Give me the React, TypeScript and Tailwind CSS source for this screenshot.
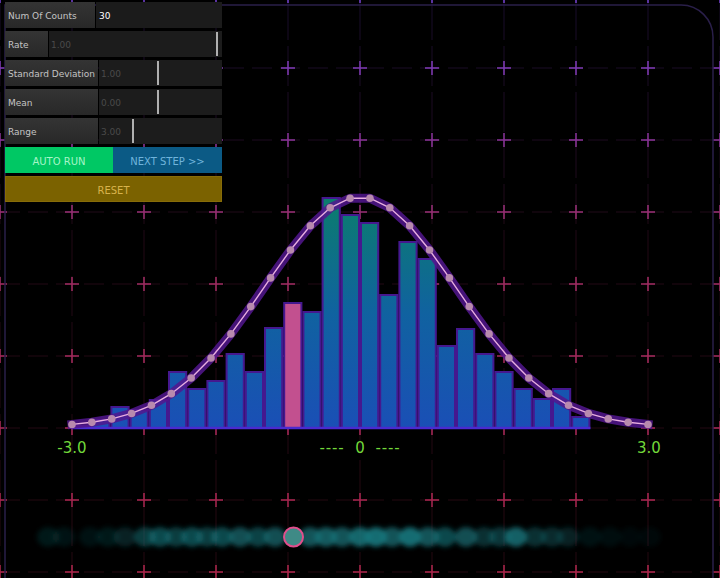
import React from 'react'

const W = 720
const H = 578
const GX = Array.from({ length: 11 }, (_, i) => i * 72)
const GY = Array.from({ length: 9 }, (_, i) => -4 + i * 72)

const AXIS_L = 72
const AXIS_R = 648
const BASE = 428
const BIN = (AXIS_R - AXIS_L) / 30

// top y of each bin, null = empty bin
const BAR_TOPS: (number | null)[] = [
  426, 420, 407, 410, 400, 372, 389, 381, 354, 372, 328, 303, 312, 198, 215,
  223, 295, 242, 259, 346, 329, 354, 372, 389, 399, 389, 417, null, null, null,
]
const PICKED = 11

const CURVE = Array.from({ length: 30 }, (_, i) => {
  const v = -3 + (i * 6) / 29
  return {
    x: AXIS_L + (i * (AXIS_R - AXIS_L)) / 29,
    y: 427 - 230 * Math.exp(-(v * v) / 2),
  }
})

// samples strip at the bottom: [x, opacity]
const BLOBS: [number, number][] = [
  [48, 0.2], [64, 0.16], [90, 0.14], [108, 0.2], [125, 0.28], [145, 0.5],
  [160, 0.6], [176, 0.5], [192, 0.6], [207, 0.5], [222, 0.6], [240, 0.65],
  [258, 0.55], [275, 0.65], [310, 0.7], [326, 0.75], [342, 0.7], [360, 0.85],
  [376, 0.9], [392, 0.7], [410, 0.9], [428, 0.7], [445, 0.6], [466, 0.65],
  [484, 0.4], [500, 0.45], [516, 0.8], [535, 0.4], [552, 0.35], [568, 0.28],
  [590, 0.14], [610, 0.11], [630, 0.08], [650, 0.07],
]

function Canvas() {
  const pts = CURVE.map((p) => `${p.x.toFixed(1)},${p.y.toFixed(1)}`).join(' ')
  return (
    <svg className="absolute inset-0" width={W} height={H} viewBox={`0 0 ${W} ${H}`}>
      <defs>
        <linearGradient id="grid" x1="0" y1="0" x2="0" y2={H} gradientUnits="userSpaceOnUse">
          <stop offset="0" stopColor="#7a45d8" />
          <stop offset="0.22" stopColor="#9038a8" />
          <stop offset="0.42" stopColor="#a8306c" />
          <stop offset="1" stopColor="#b82850" />
        </linearGradient>
        <linearGradient id="bar" x1="0" y1="198" x2="0" y2={BASE} gradientUnits="userSpaceOnUse">
          <stop offset="0" stopColor="#0b7d6c" />
          <stop offset="0.5" stopColor="#1062a0" />
          <stop offset="1" stopColor="#1a4fb6" />
        </linearGradient>
        <filter id="blur" x="-50%" y="-50%" width="200%" height="200%">
          <feGaussianBlur stdDeviation="2.6" />
        </filter>
      </defs>

      {/* grid */}
      <g stroke="url(#grid)" strokeWidth="1" opacity="0.2">
        {GX.map((x) => (
          <line key={`v${x}`} x1={x} y1={0} x2={x} y2={H} strokeDasharray="40 6" />
        ))}
        {GY.map((y) => (
          <line key={`h${y}`} x1={0} y1={y} x2={W} y2={y} strokeDasharray="20 8" />
        ))}
      </g>
      <g stroke="url(#grid)" strokeWidth="1.6" opacity="0.9">
        {GX.map((x) =>
          GY.map((y) => (
            <g key={`c${x}-${y}`}>
              <line x1={x - 7} y1={y} x2={x + 7} y2={y} />
              <line x1={x} y1={y - 7} x2={x} y2={y + 7} />
            </g>
          )),
        )}
      </g>

      {/* frame */}
      <path d="M5 578 V5 H681 A32 32 0 0 1 713 37 V578" fill="none" stroke="#2a1f4a" strokeWidth="1.5" />

      {/* histogram */}
      <g stroke="#45188f" strokeWidth="2">
        {BAR_TOPS.map((top, i) =>
          top === null ? null : (
            <rect
              key={i}
              x={AXIS_L + i * BIN + 1}
              y={top}
              width={BIN - 2}
              height={BASE - top}
              fill={i === PICKED ? '#c2508f' : 'url(#bar)'}
            />
          ),
        )}
      </g>
      <line x1={AXIS_L - 1} y1={BASE} x2={AXIS_L + 27 * BIN} y2={BASE} stroke="#4a2ad0" strokeWidth="2.5" />

      {/* normal curve */}
      <polyline points={pts} fill="none" stroke="#52168e" strokeOpacity="0.85" strokeWidth="9" strokeLinecap="square" strokeLinejoin="round" />
      <polyline points={pts} fill="none" stroke="#e8aee0" strokeWidth="1.4" />
      {CURVE.map((p, i) => (
        <circle key={i} cx={p.x} cy={p.y} r="3.8" fill="#b88aae" />
      ))}

      {/* axis labels */}
      <g fill="#72d83a" fontFamily="'DejaVu Sans', sans-serif" fontSize="15" textAnchor="middle">
        <text x="72" y="453">-3.0</text>
        <text x="649" y="453">3.0</text>
        <text x="332" y="453" letterSpacing="0.8">----</text>
        <text x="360" y="453">0</text>
        <text x="388" y="453" letterSpacing="0.8">----</text>
      </g>

      {/* samples strip */}
      <g filter="url(#blur)">
        {BLOBS.map(([x, o]) => (
          <ellipse key={x} cx={x} cy={537} rx={11} ry={10} fill="#18787e" opacity={o} />
        ))}
      </g>
      <circle cx="293.5" cy="537" r="9.5" fill="#3f8a86" stroke="#e04e8c" strokeWidth="2" />
    </svg>
  )
}

function SliderRow({
  label,
  labelW,
  value,
  handle,
}: {
  label: string
  labelW: string
  value: string
  handle: string
}) {
  return (
    <div className="flex h-[26px]">
      <div className={`${labelW} flex items-center pl-[3px] pt-[4px] bg-gradient-to-b from-[#343434] to-[#282828] text-[#c4c4c4]`}>
        {label}
      </div>
      <div className="relative flex-1 ml-px flex items-center pl-[2px] pt-[4px] bg-[#1c1c1c] text-[#4a4a4a]">
        {value}
        <span className={`absolute top-[1px] bottom-[1px] w-[2px] bg-[#b0b0b0] ${handle}`} />
      </div>
    </div>
  )
}

export default function App() {
  return (
    <div className="relative w-[720px] h-[578px] bg-black overflow-hidden font-['DejaVu_Sans',sans-serif]">
      <Canvas />

      <div className="absolute left-[5px] top-[2px] w-[217px] flex flex-col gap-[3px] text-[9px]">
        <div className="flex h-[26px]">
          <div className="w-[90px] flex items-center pl-[3px] pt-[4px] bg-gradient-to-b from-[#343434] to-[#282828] text-[#c4c4c4]">
            Num Of Counts
          </div>
          <div className="flex-1 ml-px flex items-center pl-[3px] pt-[4px] bg-[#1b1b1b] text-white">30</div>
        </div>
        <SliderRow label="Rate" labelW="w-[43px]" value="1.00" handle="left-[167px]" />
        <SliderRow label="Standard Deviation" labelW="w-[93px]" value="1.00" handle="left-[58px]" />
        <SliderRow label="Mean" labelW="w-[93px]" value="0.00" handle="left-[58px]" />
        <SliderRow label="Range" labelW="w-[93px]" value="3.00" handle="left-[33px]" />

        <div className="flex h-[26px] text-[10px]">
          <button className="w-[108px] pt-[2px] bg-[#00c864] text-[#a6f5c8]">AUTO RUN</button>
          <button className="flex-1 pt-[2px] bg-[#0b5a85] text-[#6fb4dc]">NEXT STEP &gt;&gt;</button>
        </div>
        <button className="h-[26px] pt-[2px] bg-[#7b6200] border border-[#876c08] text-[10px] text-[#d8b24c]">
          RESET
        </button>
      </div>
    </div>
  )
}
